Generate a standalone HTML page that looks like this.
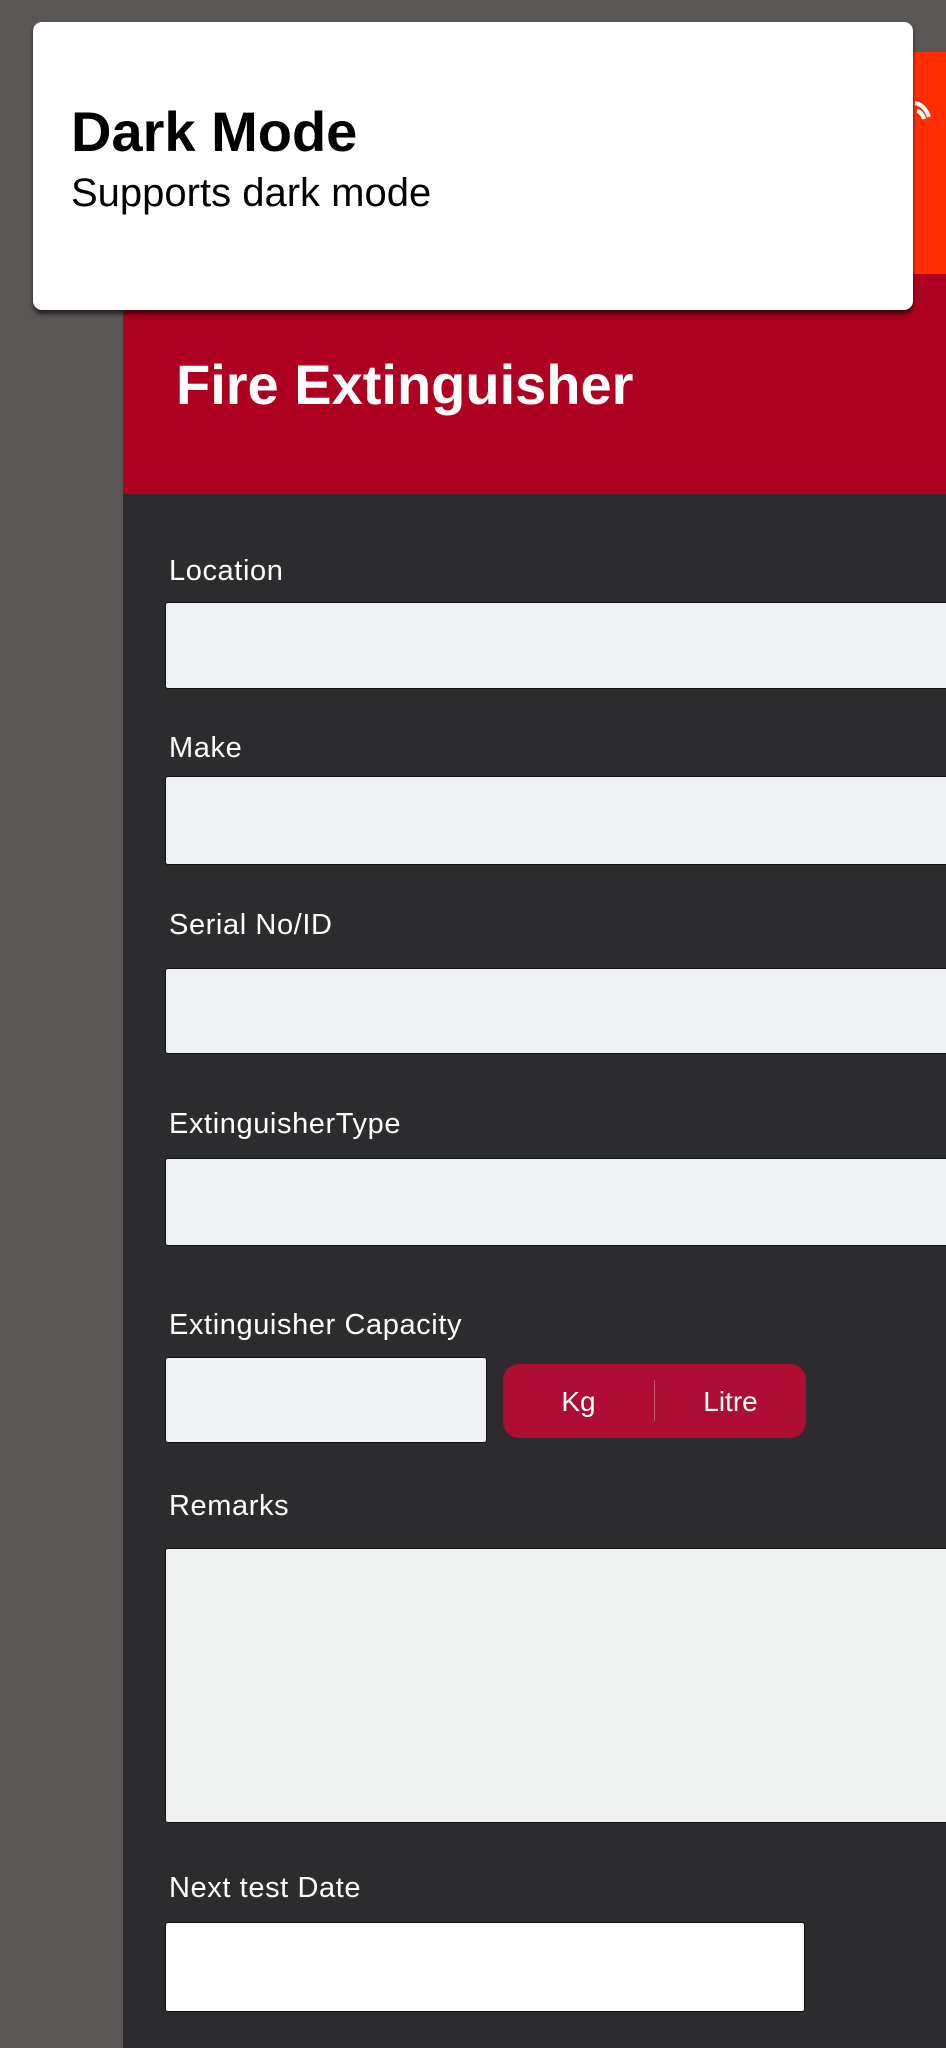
<!DOCTYPE html>
<html><head><meta charset="utf-8"><style>
*{margin:0;padding:0;box-sizing:border-box}
body{width:946px;height:2048px;background:#5a5655;position:relative;overflow:hidden;font-family:"Liberation Sans",sans-serif}
.abs{position:absolute}
.lbl{position:absolute;left:169px;color:#fff;font-size:29px;letter-spacing:0.6px;line-height:1}
.inp{position:absolute;left:165px;width:800px;background:#eef1f3;border:1.5px solid #111;border-radius:3px}
</style></head><body>
<div class="abs" style="left:123px;top:52px;width:823px;height:222px;background:#ff2d00"></div>
<svg class="abs" style="left:905px;top:95px" width="41" height="40" viewBox="0 0 41 40"><path d="M10 8 Q20 10 24 22" stroke="#fff" stroke-width="4" fill="none"/><path d="M12 16 Q17 17 19 24" stroke="#fff" stroke-width="4" fill="none"/></svg>
<div class="abs" style="left:123px;top:274px;width:823px;height:220px;background:#ae0020"></div>
<div class="abs" style="left:176px;top:357px;color:#fff;font-weight:bold;font-size:56px;line-height:1">Fire Extinguisher</div>
<div class="abs" style="left:123px;top:494px;width:823px;height:1554px;background:#2c2c2e"></div>
<div class="abs" style="left:33px;top:22px;width:880px;height:288px;background:#fff;border-radius:9px;box-shadow:0 4px 4px rgba(0,0,0,0.6)"></div>
<div class="abs" style="left:71px;top:104px;color:#000;font-weight:bold;font-size:56px;line-height:1">Dark Mode</div>
<div class="abs" style="left:71px;top:173px;color:#000;font-size:40px;line-height:1">Supports dark mode</div>

<div class="lbl" style="top:557px">Location</div>
<div class="inp" style="top:602px;height:87px"></div>
<div class="lbl" style="top:734px">Make</div>
<div class="inp" style="top:776px;height:89px"></div>
<div class="lbl" style="top:911px">Serial No/ID</div>
<div class="inp" style="top:968px;height:86px"></div>
<div class="lbl" style="top:1110px">ExtinguisherType</div>
<div class="inp" style="top:1158px;height:88px"></div>
<div class="lbl" style="top:1311px">Extinguisher Capacity</div>
<div class="inp" style="top:1357px;height:86px;width:322px"></div>
<div class="abs" style="left:503px;top:1364px;width:303px;height:74px;background:#ad0c33;border-radius:16px"></div>
<div class="abs" style="left:654px;top:1380px;width:1px;height:41px;background:#c9566e"></div>
<div class="abs" style="left:503px;top:1388px;width:151px;text-align:center;color:#fff;font-size:28px;line-height:1">Kg</div>
<div class="abs" style="left:655px;top:1388px;width:151px;text-align:center;color:#fff;font-size:28px;line-height:1">Litre</div>
<div class="lbl" style="top:1492px">Remarks</div>
<div class="inp" style="top:1548px;height:275px;background:#eef0ef"></div>
<div class="lbl" style="top:1874px">Next test Date</div>
<div class="inp" style="top:1922px;height:90px;width:640px;background:#fff"></div>
</body></html>
